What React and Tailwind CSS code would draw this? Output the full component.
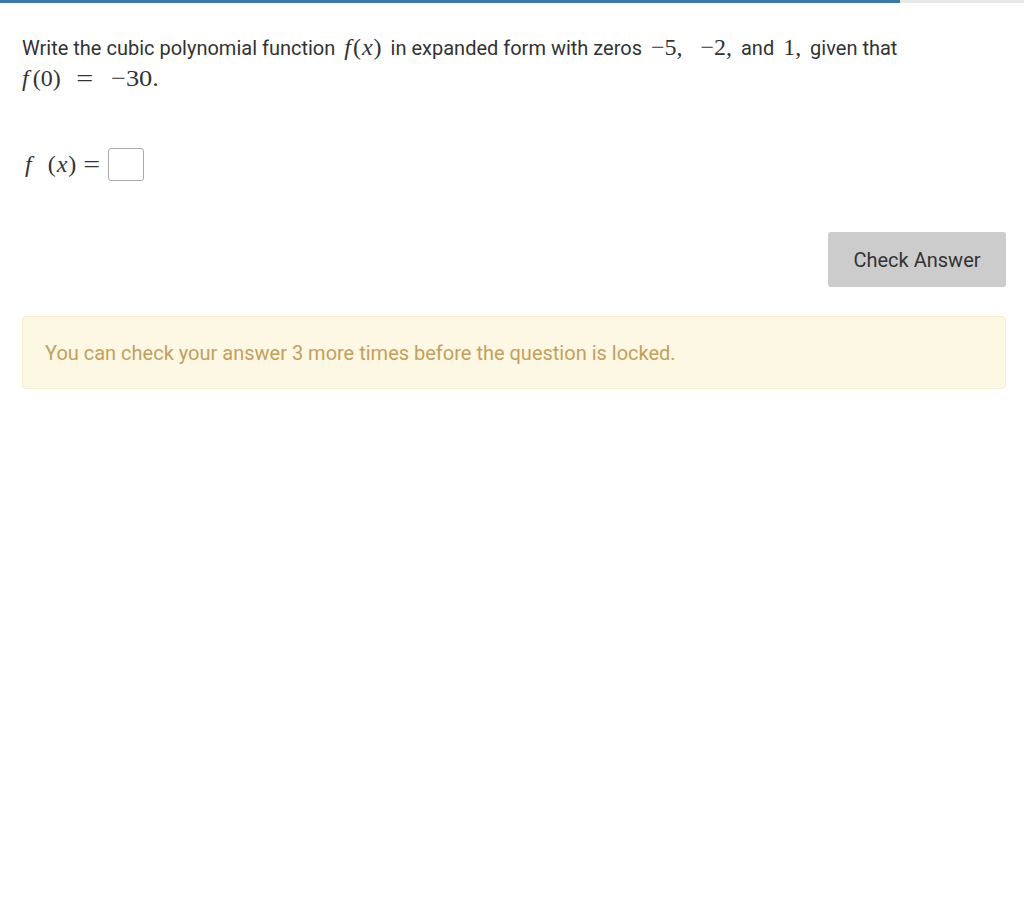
const serif = { fontFamily: '"Liberation Serif", "DejaVu Serif", serif' };

const Math = ({ children }) => (
  <span className="mx-[4px] text-[24px]" style={serif}>
    {children}
  </span>
);

const F = ({ pad = 'pr-[2px]' }) => <i className={pad}>f</i>;

export default function App() {
  return (
    <div className="min-h-[922px] bg-white text-[#333] font-['Roboto',sans-serif]">
      <div className="flex h-[3px]">
        <div className="w-[900px] bg-[#3a78b0]" />
        <div className="flex-1 bg-[#e8e8e8]" />
      </div>
      <div className="pl-[22px] pr-[18px] pt-[29px]">
        <p className="text-[20px] leading-[30px]">
          Write the cubic polynomial function{' '}
          <Math>
            <F />(<i className="px-[1px]">x</i>)
          </Math>{' '}
          in expanded form with zeros <Math>−5, &nbsp;&nbsp;−2,</Math> and <Math>1,</Math> given that
          <br />
          <span className="text-[24px]" style={serif}>
            <F pad="pr-[4px]" />(0)<span className="ml-[17px] mr-[20px] inline-block scale-x-125">=</span>
            <span className="inline-block scale-x-110 origin-left">−30.</span>
          </span>
        </p>
        <div className="mt-[52px] flex items-center gap-[9px] pl-[3px]">
          <span className="text-[24px]" style={serif}>
            <F />
            <span className="ml-[14px]">(</span>
            <i className="px-[1px]">x</i>)<span className="ml-[9px] inline-block scale-x-125">=</span>
          </span>
          <div className="h-[33px] w-[36px] rounded-[3px] border border-[#aaa] bg-white" />
        </div>
        <div className="mt-[50px] flex justify-end">
          <button className="h-[55px] w-[178px] rounded-[3px] bg-[#cccccc] text-[20px] text-[#333]">
            Check Answer
          </button>
        </div>
        <div className="mt-[29px] flex h-[73px] items-center rounded-[4px] border border-[#faebcc] bg-[#fcf8e3] px-[22px] text-[20px] text-[#c3a05c]">
          You can check your answer 3 more times before the question is locked.
        </div>
      </div>
    </div>
  );
}
